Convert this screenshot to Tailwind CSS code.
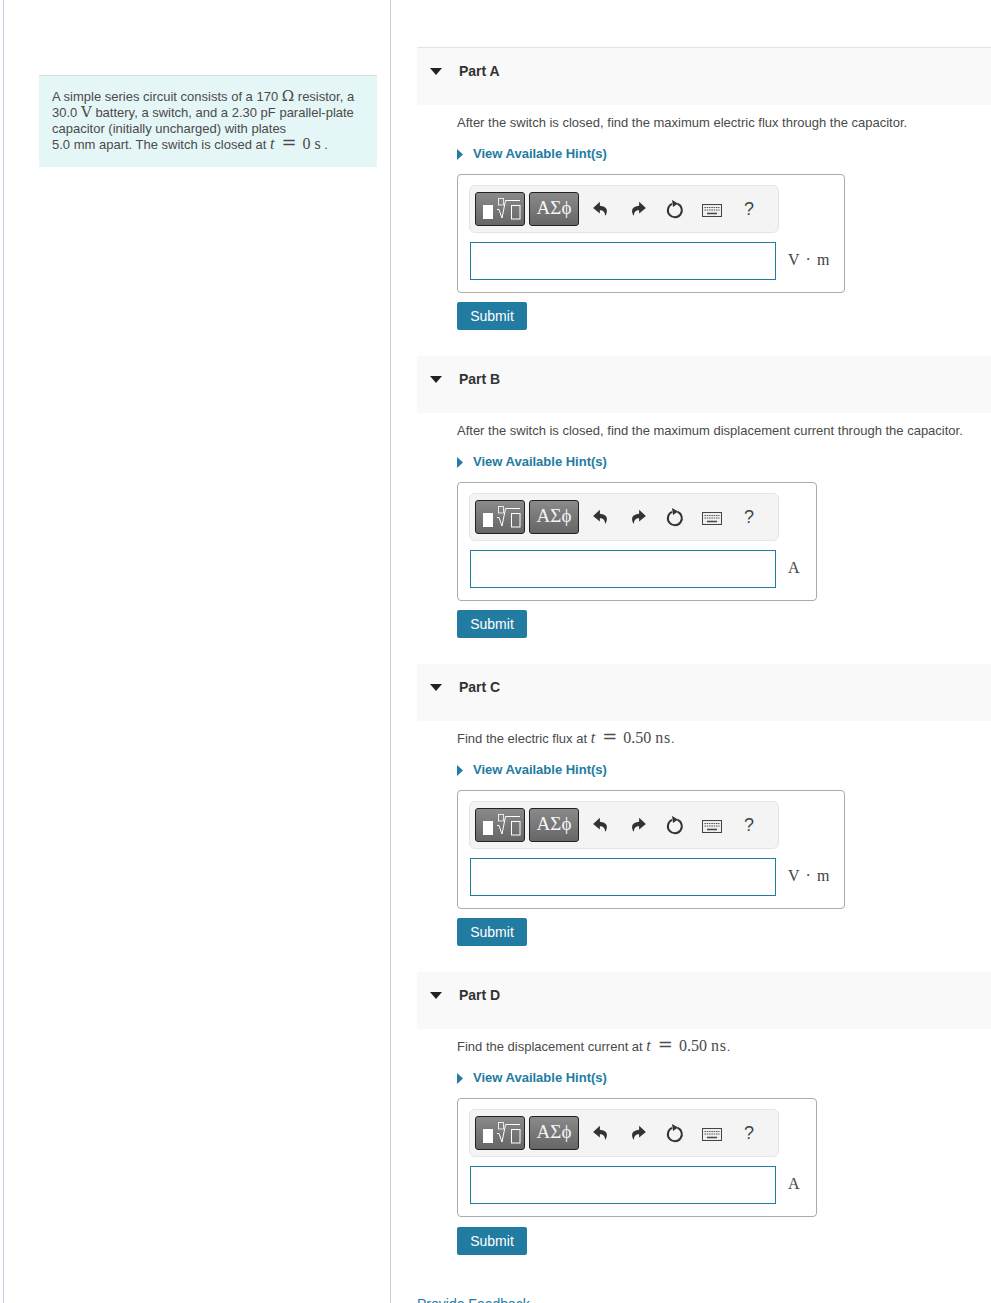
<!DOCTYPE html>
<html lang="en">
<head>
  <meta charset="UTF-8">
  <title>Parts</title>
  <script src="https://cdn.jsdelivr.net/npm/@tailwindcss/browser@4"></script>
</head>
<body class="bg-white font-['Liberation_Sans',Arial,sans-serif] text-[13px] text-[#4a4a4a] h-[1303px] overflow-hidden">
  <div class="flex h-[1303px] pl-[3px]">
    <!-- Intro column -->
    <aside class="w-[388px] shrink-0 border-x border-[#c5d3e0] pl-[35px] pr-[13px] pt-[75px]">
      <div class="bg-[#e5f6f7] border-t border-[#d5e3e6] h-[92px] pl-[13px] pr-[10px] pt-[13px] leading-[16px] whitespace-nowrap">
        A simple series circuit consists of a 170 <span class="font-['DejaVu_Serif',serif] text-[15px] leading-[0]">Ω</span> resistor, a<br>
        30.0 <span class="font-['DejaVu_Serif',serif] text-[15px] leading-[0]">V</span> battery, a switch, and a 2.30 pF parallel-plate<br>
        capacitor (initially uncharged) with plates<br>
        5.0 mm apart. The switch is closed at <span class="font-['Liberation_Serif',serif] text-[16px] leading-[0] italic">t</span><span class="ml-[7px] font-['DejaVu_Serif',serif] text-[18px] leading-[0]">=</span><span class="ml-[6px] font-['Liberation_Serif',serif] text-[16px] leading-[0]">0</span><span class="ml-[4px] font-['Liberation_Serif',serif] text-[16px] leading-[0]">s</span> .
      </div>
    </aside>

    <!-- Parts column -->
    <main class="flex-1 pl-[26px] pt-[47px] min-w-0">
      <div id="parts"></div>
      <a class="block text-[#227ba0] text-[14px] leading-[16px] whitespace-nowrap">Provide Feedback</a>
    </main>
  </div>

  <script>
    const eq = '<span class="font-[\'Liberation_Serif\',serif] text-[16px] leading-[0] italic">t</span><span class="ml-[7px] font-[\'DejaVu_Serif\',serif] text-[18px] leading-[0]">=</span><span class="ml-[6px] font-[\'Liberation_Serif\',serif] text-[16px] leading-[0]">0.50</span><span class="ml-[4px] font-[\'Liberation_Serif\',serif] text-[16px] leading-[0] tracking-[0.8px]">ns</span>.';
    const parts = [
      { name: 'Part A', q: 'After the switch is closed, find the maximum electric flux through the capacitor.', unit: 'V', box: 'w-[388px]', head: 'h-[58px] border-t border-[#e3e3e3] pt-[15px]', gap: 'mt-[9px]', end: 'h-[26px]' },
      { name: 'Part B', q: 'After the switch is closed, find the maximum displacement current through the capacitor.', unit: 'A', box: 'w-[360px]', head: 'h-[57px] pt-[15px]', gap: 'mt-[9px]', end: 'h-[26px]' },
      { name: 'Part C', q: 'Find the electric flux at ' + eq, unit: 'V', box: 'w-[388px]', head: 'h-[57px] pt-[15px]', gap: 'mt-[9px]', end: 'h-[26px]' },
      { name: 'Part D', q: 'Find the displacement current at ' + eq, unit: 'A', box: 'w-[360px]', head: 'h-[57px] pt-[15px]', gap: 'mt-[10px]', end: 'h-[41px]' }
    ];

    document.getElementById('parts').innerHTML = parts.map(p => `
      <section>
        <div class="${p.head} bg-[#f9f9f9] flex items-start">
          <svg class="ml-[13px] mt-[5px] w-[12px] h-[7px]" viewBox="0 0 12 7"><path d="M0 0h12L6 7z" fill="#222"/></svg>
          <h2 class="ml-[17px] font-bold text-[#333] text-[14px] leading-[16px]">${p.name}</h2>
        </div>
        <div class="pl-[40px]">
          <p class="mt-[9px] h-[18px] leading-[18px] whitespace-nowrap">${p.q}</p>
          <a class="mt-[14px] h-[16px] flex items-center gap-[10px] font-bold text-[#227ba0] leading-[16px]">
            <svg class="w-[6px] h-[11px]" viewBox="0 0 6 11"><path d="M0 0l6 5.500L0 11z" fill="#227ba0"/></svg>
            View Available Hint(s)
          </a>
          <div class="${p.box} mt-[12px] h-[119px] border border-[#aaa] rounded-[4px] pl-[11px] pt-[10px]">
            <div class="w-[310px] h-[48px] bg-[#f4f4f4] border border-[#e4e4e4] rounded-[6px] flex items-center pl-[5px]">
              <div class="w-[50px] h-[34px] rounded-[3px] border border-[#222] bg-gradient-to-b from-[#8a8a8a] to-[#666666]">
                <svg class="w-[48px] h-[32px]" viewBox="0 0 48 32" fill="none" stroke="#fff"><rect x="7" y="12" width="10" height="14" fill="#fff" stroke="none"/><rect x="22.500" y="5.500" width="5" height="6.500" stroke-width=".8"/><path d="M21 16.500h2l3 8.500L29.500 7.500H44" stroke-width="1"/><rect x="35.500" y="12.500" width="8.500" height="13.500" stroke-width="1"/></svg>
              </div>
              <div class="ml-[4px] w-[50px] h-[34px] rounded-[3px] border border-[#222] bg-gradient-to-b from-[#8a8a8a] to-[#666666] text-[#f4f4f4] font-['Liberation_Serif',serif] text-[19px] leading-[30px] text-center">ΑΣϕ</div>
              <svg class="ml-[13px] w-[18px] h-[18px]" viewBox="0 0 16 16"><path d="M7 1.500L1 7l6 5V9.200c3 0 4.300 1.300 4.800 5 2.600-4.300 2.200-8.600-4.800-9.200z" fill="#333"/></svg>
              <svg class="ml-[19px] w-[18px] h-[18px]" viewBox="0 0 16 16"><path d="M9 1.500L15 7l-6 5V9.200c-3 0-4.300 1.300-4.800 5C1.600 9.900 2 5.600 9 5z" fill="#333"/></svg>
              <svg class="ml-[19px] w-[18px] h-[20px]" viewBox="0 0 18 20" fill="none"><path d="M11.500 4.800A7 7 0 1 1 6 4.900" stroke="#333" stroke-width="2"/><path d="M6 1l6 3.500L7 8z" fill="#333"/></svg>
              <svg class="ml-[18px] mt-[3px] w-[20px] h-[13px]" viewBox="0 0 20 13" fill="none"><rect x=".5" y=".5" width="19" height="12" fill="#eee" stroke="#444"/><path d="M2.500 3.500h15M2.500 6h15" stroke="#555" stroke-width="1.200" stroke-dasharray="1.500 .8"/><path d="M5 9.500h10" stroke="#444" stroke-width="1.500"/></svg>
              <span class="ml-[22px] w-[20px] text-[18px] text-[#444] leading-[20px]">?</span>
            </div>
            <div class="mt-[9px] flex items-center">
              <div class="ml-[1px] w-[306px] h-[38px] border border-[#227ba0] bg-white"></div>
              <span class="ml-[12px] -mt-[2px] font-['Liberation_Serif',serif] text-[16px] text-[#444] whitespace-nowrap">${p.unit}${p.unit === 'V' ? '<span class="ml-[6px]">·</span><span class="ml-[6px] tracking-[0.5px]">m</span>' : ''}</span>
            </div>
          </div>
          <button class="${p.gap} block w-[70px] h-[28px] bg-[#227ba0] rounded-[2px] text-white text-[14px]">Submit</button>
          <div class="${p.end}"></div>
        </div>
      </section>`).join('');
  </script>
</body>
</html>
